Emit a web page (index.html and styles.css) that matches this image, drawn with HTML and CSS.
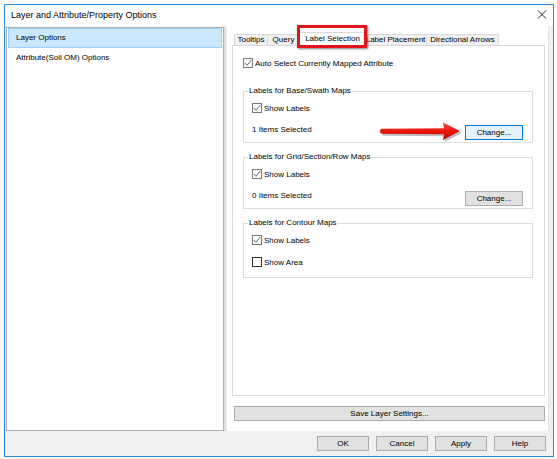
FILE: index.html
```html
<!DOCTYPE html>
<html>
<head>
<meta charset="utf-8">
<link rel="stylesheet" href="styles.css">
</head>
<body>
<div class="window">
  <div class="titlebar">
    <span class="title">Layer and Attribute/Property Options</span>
    <svg class="close" width="10" height="9" viewBox="0 0 10 9"><path d="M1 0.5 L9 8.5 M9 0.5 L1 8.5" stroke="#222" stroke-width="1" fill="none"/></svg>
  </div>
  <div class="client">
    <div class="main">
      <div class="list">
        <div class="item selected">Layer Options</div>
        <div class="item">Attribute(Soil OM) Options</div>
      </div>
      <div class="splitter"></div>
      <div class="panel">
        <div class="tabs">
          <div class="tab t1">Tooltips</div>
          <div class="tab t2">Query</div>
          <div class="tab t3 active">Label Selection</div>
          <div class="tab t4">Label Placement</div>
          <div class="tab t5">Directional Arrows</div>
          <div class="redbox"></div>
        </div>
        <div class="page">
          <label class="check top"><span class="box on"><svg width="8" height="8" viewBox="0 0 8 8"><path d="M0.8 4 L3 6.3 L7.3 1" stroke="#555" stroke-width="0.9" fill="none"/></svg></span><span>Auto Select Currently Mapped Attribute</span></label>

          <fieldset class="group g1">
            <legend>Labels for Base/Swath Maps</legend>
            <label class="check"><span class="box on"><svg width="8" height="8" viewBox="0 0 8 8"><path d="M0.8 4 L3 6.3 L7.3 1" stroke="#555" stroke-width="0.9" fill="none"/></svg></span><span>Show Labels</span></label>
            <div class="itemsrow">
              <span class="count">1 Items Selected</span>
              <button class="btn change focus">Change...</button>
            </div>
            <svg class="arrow" width="86" height="22" viewBox="0 0 86 22">
              <defs>
                <linearGradient id="rg" x1="0" y1="0" x2="0" y2="1">
                  <stop offset="0" stop-color="#ff4a3a"/>
                  <stop offset="0.5" stop-color="#e8150c"/>
                  <stop offset="1" stop-color="#b80a04"/>
                </linearGradient>
              </defs>
              <path d="M3 10 Q3 7.8 5 7.8 L67 7.3 L66 1.5 L83 10 L66 19 L67 13.2 L5 12.7 Q3 12.7 3 10 Z" fill="#000" opacity="0.25" transform="translate(1.5,2)"/>
              <path d="M3 10 Q3 7.8 5 7.8 L67 7.3 L66 1.5 L83 10 L66 19 L67 13.2 L5 12.7 Q3 12.7 3 10 Z" fill="url(#rg)"/>
            </svg>
          </fieldset>

          <fieldset class="group g2">
            <legend>Labels for Grid/Section/Row Maps</legend>
            <label class="check"><span class="box on"><svg width="8" height="8" viewBox="0 0 8 8"><path d="M0.8 4 L3 6.3 L7.3 1" stroke="#555" stroke-width="0.9" fill="none"/></svg></span><span>Show Labels</span></label>
            <div class="itemsrow">
              <span class="count">0 Items Selected</span>
              <button class="btn change">Change...</button>
            </div>
          </fieldset>

          <fieldset class="group g3">
            <legend>Labels for Contour Maps</legend>
            <label class="check"><span class="box on"><svg width="8" height="8" viewBox="0 0 8 8"><path d="M0.8 4 L3 6.3 L7.3 1" stroke="#555" stroke-width="0.9" fill="none"/></svg></span><span>Show Labels</span></label>
            <label class="check area"><span class="box off"></span><span>Show Area</span></label>
          </fieldset>
        </div>
        <button class="btn save">Save Layer Settings...</button>
      </div>
    </div>
    <div class="buttons">
      <button class="btn dlg">OK</button>
      <button class="btn dlg">Cancel</button>
      <button class="btn dlg">Apply</button>
      <button class="btn dlg">Help</button>
    </div>
  </div>
</div>
</body>
</html>
```
FILE: styles.css
```css
html, body {
  margin: 0;
  padding: 0;
  background: #ffffff;
}
body {
  font-family: "Liberation Sans", Arial, sans-serif;
  font-size: 8px;
  color: #000;
  width: 557px;
  height: 459px;
  overflow: hidden;
}
.window {
  margin: 4px 0 0 4px;
  width: 550px;
  height: 453px;
  box-sizing: border-box;
  border: 1px solid #2b8ae0;
  display: flex;
  flex-direction: column;
  background: #fff;
}
.titlebar {
  height: 21px;
  flex: none;
  display: flex;
  align-items: center;
  justify-content: space-between;
  padding: 0 6px 0 6px;
  background: #fff;
}
.title {
  font-size: 9px;
  line-height: 10px;
  margin-top: -1px;
}
.close {
  display: block;
  margin-top: -3px;
}
.client {
  flex: 1;
  display: flex;
  flex-direction: column;
  background: #f0f0f0;
}
.main {
  height: 405px;
  display: flex;
  padding-left: 1px;
  box-sizing: border-box;
  padding-top: 1px;
}
.list {
  width: 218px;
  background: #fff;
  border: 1px solid #adb2bb;
  box-sizing: border-box;
  padding: 0 1px;
}
.item {
  height: 20px;
  line-height: 20px;
  padding-left: 8px;
  box-sizing: border-box;
}
.item.selected {
  background: #cce8ff;
  border: 1px solid #99d1ff;
  line-height: 18px;
  padding-left: 7px;
}
.splitter {
  width: 2px;
  background: #dedede;
  margin-left: 0;
}
.panel {
  width: 322px;
  margin-left: 1px;
  background: #fff;
  border-right: 1px solid #e3e3e3;
  margin-top: -1px;
  padding: 5px 3px 0 5px;
  box-sizing: border-box;
  display: flex;
  flex-direction: column;
}
.tabs {
  display: flex;
  align-items: flex-end;
  height: 14px;
  padding-left: 2px;
  position: relative;
  z-index: 1;
}
.tab {
  height: 11px;
  line-height: 10px;
  box-sizing: border-box;
  border: 1px solid #d9d9d9;
  border-bottom: none;
  border-left: none;
  background: #f0f0f0;
  text-align: center;
  margin-bottom: 0;
}
.tab.t1 { width: 34px; border-left: 1px solid #d9d9d9; }
.tab.t2 { width: 32px; }
.tab.t3 { width: 65px; }
.tab.t4 { width: 62px; }
.tab.t5 { width: 72px; }
.tab.active {
  height: 14px;
  line-height: 12px;
  background: #fff;
  border: 1px solid #d9d9d9;
  border-bottom: none;
  margin-bottom: -1px;
  margin-left: -1px;
  margin-right: -1px;
  width: 67px;
  padding-bottom: 1px;
}
.redbox {
  position: absolute;
  left: 65px;
  top: -6px;
  width: 64px;
  height: 17px;
  border: 3px solid #e3151a;
  box-shadow: 1px 1px 2px rgba(0,0,0,0.5);
}
.page {
  height: 351px;
  box-sizing: border-box;
  border: 1px solid #d9d9d9;
  background: #fff;
  padding: 8px 11px 0 10px;
  display: flex;
  flex-direction: column;
}
.check {
  display: flex;
  align-items: center;
  height: 16px;
}
.check.top {
  height: 18px;
  margin-top: 0px;
}
.box {
  width: 10px;
  height: 10px;
  box-sizing: border-box;
  border: 1px solid #7a7a7a;
  background: #fff;
  margin-right: 2px;
  display: flex;
  align-items: center;
  justify-content: center;
}
.box.off {
  border-color: #333;
}
.box svg { display: block; }
.group {
  margin: 0;
  padding: 0 9px 2px 8px;
  border: 1px solid #dcdcdc;
  position: relative;
  min-width: 0;
}
.group legend {
  padding: 0 1px;
  margin-left: -4px;
  line-height: 10px;
  height: 10px;
}
.g1 { margin-top: 14px; }
.g2 { margin-top: 9px; }
.g3 { margin-top: 9px; padding-bottom: 7px; }
.group .check { margin-top: 4px; }
.group .check.area { margin-top: 6px; }
.itemsrow {
  margin-top: 7px;
  height: 17px;
  display: flex;
  align-items: center;
  justify-content: space-between;
}
.count {
  padding-bottom: 4px;
}
.btn {
  font-family: "Liberation Sans", Arial, sans-serif;
  font-size: 8px;
  color: #000;
  background: #e1e1e1;
  border: 1px solid #adadad;
  box-sizing: border-box;
  padding: 0;
  margin: 0;
  height: 15px;
  line-height: 13px;
}
.change {
  width: 58px;
  margin-top: 1px;
}
.change.focus {
  border: 1px solid #0078d7;
  background: #e5f1fb;
}
.arrow {
  position: absolute;
  left: 133px;
  top: 25px;
}
.save {
  margin-top: 10px;
  margin-left: 2px;
  width: 311px;
  height: 15px;
}
.buttons {
  flex: 1;
  display: flex;
  justify-content: flex-end;
  gap: 7px;
  padding: 5px 7px 0 0;
}
.dlg {
  width: 52px;
  height: 15px;
}
```
